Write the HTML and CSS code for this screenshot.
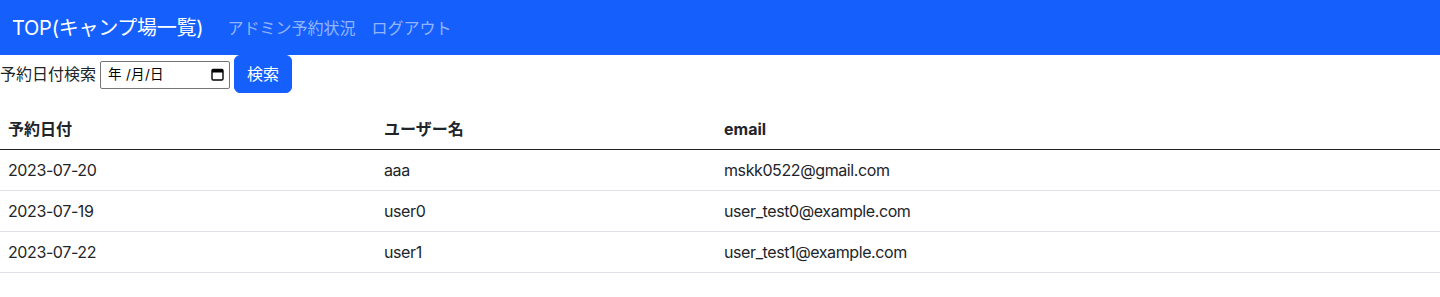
FILE: index.html
```html
<!DOCTYPE html>
<html lang="ja">
<head>
<meta charset="utf-8">
<title>予約状況</title>
<link rel="stylesheet" href="styles.css">
</head>
<body>
<nav class="navbar">
  <a class="brand" href="#">TOP(キャンプ場一覧)</a>
  <ul class="nav">
    <li><a class="nav-link" href="#">アドミン予約状況</a></li>
    <li><a class="nav-link" href="#">ログアウト</a></li>
  </ul>
</nav>
<form class="search">
  <label class="search-label">予約日付検索</label>
  <div class="date-input">
    <span class="date-text">年 /月/日</span>
    <svg class="cal" width="13" height="13" viewBox="0 0 13 13" aria-hidden="true">
      <rect x="1" y="1.5" width="11" height="10.5" rx="1.2" fill="none" stroke="#000" stroke-width="1.4"/>
      <rect x="1" y="1.5" width="11" height="3" fill="#000"/>
    </svg>
  </div>
  <button class="btn" type="button">検索</button>
</form>
<table class="table">
  <thead>
    <tr><th class="c1">予約日付</th><th class="c2">ユーザー名</th><th class="c3">email</th></tr>
  </thead>
  <tbody>
    <tr><td>2023-07-20</td><td>aaa</td><td>mskk0522@gmail.com</td></tr>
    <tr><td>2023-07-19</td><td>user0</td><td>user_test0@example.com</td></tr>
    <tr><td>2023-07-22</td><td>user1</td><td>user_test1@example.com</td></tr>
  </tbody>
</table>
</body>
</html>
```
FILE: styles.css
```css
* { box-sizing: border-box; }
body {
  margin: 0;
  font-family: Inter, "Noto Sans CJK JP", sans-serif;
  font-size: 16px;
  line-height: 1.5;
  color: #212529;
  background: #fff;
}
.navbar {
  height: 55px;
  background: #1560fd;
  display: flex;
  align-items: center;
  padding: 0 12px;
}
.brand {
  color: #fff;
  font-size: 20px;
  text-decoration: none;
  margin-right: 16px;
  line-height: 30px;
  letter-spacing: -0.25px;
}
.nav {
  list-style: none;
  margin: 0;
  padding: 0;
  display: flex;
}
.nav-link {
  display: block;
  padding: 0 8px;
  color: rgba(255,255,255,.55);
  text-decoration: none;
  font-size: 16px;
}
.search {
  display: flex;
  align-items: center;
  margin: 0;
  height: 38px;
}
.search-label {
  margin-right: 4px;
}
.date-input {
  width: 130px;
  height: 28px;
  border: 1px solid #767676;
  border-radius: 2px;
  display: flex;
  align-items: center;
  justify-content: space-between;
  padding: 0 5px 0 7px;
  font-size: 13.5px;
  color: #000;
  margin-top: 1px;
}
.date-text { letter-spacing: 0.3px; }
.cal { display: block; }
.btn {
  margin-left: 4px;
  height: 38px;
  padding: 6px 12px;
  border: 1px solid #1560fd;
  background: #1560fd;
  color: #fff;
  font-family: inherit;
  font-size: 16px;
  line-height: 24px;
  border-radius: 6px;
  align-self: flex-start;
  margin-top: 0;
}
.table {
  width: 100%;
  border-collapse: collapse;
  margin-top: 16px;
}
.table th, .table td {
  text-align: left;
  padding: 8px;
  border-bottom: 1px solid #dee2e6;
  line-height: 24px;
}
.table td { letter-spacing: -0.4px; }
.table th { font-weight: 700; }
.table thead th { border-bottom: 1px solid #212529; }
.c1 { width: 376px; }
.c2 { width: 340px; }
```
